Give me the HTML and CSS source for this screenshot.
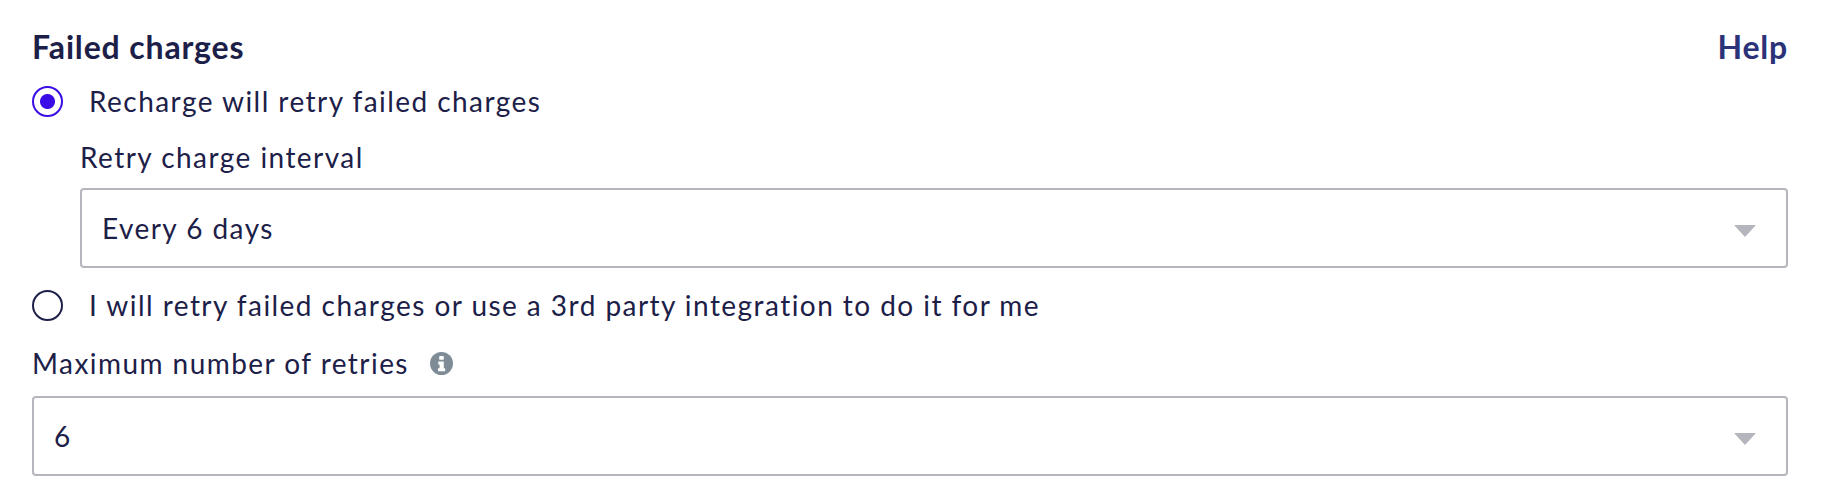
FILE: index.html
```html
<!DOCTYPE html>
<html lang="en">
<head>
<meta charset="utf-8">
<title>Failed charges</title>
<link rel="stylesheet" href="styles.css">
</head>
<body>
<section class="panel">
  <header class="panel-head">
    <h2 class="panel-title">Failed charges</h2>
    <a class="help" href="#">Help</a>
  </header>
  <label class="radio-row radio-row-first">
    <input class="radio" type="radio" name="retry" checked>
    <span>Recharge will retry failed charges</span>
  </label>
  <div class="nested">
    <div class="field-label field-label-nested">Retry charge interval</div>
    <div class="select">
      <span>Every 6 days</span>
      <svg class="caret" viewBox="0 0 22 12" width="22" height="12"><path d="M0 0H22L11 12Z"/></svg>
    </div>
  </div>
  <label class="radio-row radio-row-second">
    <input class="radio" type="radio" name="retry">
    <span>I will retry failed charges or use a 3rd party integration to do it for me</span>
  </label>
  <div class="field-label field-label-max">
    <span>Maximum number of retries</span>
    <svg class="info" viewBox="0 0 24 24" width="23" height="23">
      <circle cx="12" cy="12" r="12" fill="#7f8c97"/>
      <rect x="9.6" y="4.2" width="4.8" height="4" rx="1" fill="#fff"/>
      <path d="M8.6 10h5.8v7h1.4v3.2H8.4V17h1.6v-3.9H8.6z" fill="#fff"/>
    </svg>
  </div>
  <div class="select">
    <span>6</span>
    <svg class="caret" viewBox="0 0 22 12" width="22" height="12"><path d="M0 0H22L11 12Z"/></svg>
  </div>
</section>
</body>
</html>
```
FILE: styles.css
```css
* { box-sizing: border-box; }
html, body { margin: 0; background: #fff; }
body {
  height: 500px;
  overflow: hidden;
  font-family: "Lato", "Liberation Sans", sans-serif;
  font-size: 28px;
  letter-spacing: 1.45px;
  color: #1c2048;
}
.panel { padding: 29px 40px 0 32px; }
.panel-head {
  display: flex;
  justify-content: space-between;
  align-items: center;
  height: 36px;
}
.panel-title { margin: 0; font-size: 32px; font-weight: 700; letter-spacing: 0.85px; line-height: 36px; }
.help { font-size: 32px; font-weight: 700; letter-spacing: 0.8px; color: #2b3278; text-decoration: none; line-height: 36px; }
.radio-row { display: flex; align-items: center; gap: 26px; height: 32px; }
.radio-row-first { margin-top: 20px; }
.radio-row-second { margin-top: 21px; }
.radio {
  appearance: none;
  flex: none;
  width: 31px;
  height: 31px;
  margin: 0;
  border: 2px solid #1c2048;
  border-radius: 50%;
  background: #fff;
}
.radio:checked {
  border-color: #3a0ce6;
  background: radial-gradient(circle, #3a0ce6 0 7px, #fff 8px);
}
.nested { margin-left: 48px; }
.field-label { line-height: 32px; height: 32px; }
.field-label-nested { margin-top: 24px; margin-bottom: 15px; }
.field-label-max { display: flex; align-items: center; gap: 21px; margin-top: 26px; margin-bottom: 17px; }
.select {
  position: relative;
  display: flex;
  align-items: center;
  height: 80px;
  padding-left: 20px;
  border: 2px solid #b5b5bd;
  border-radius: 4px;
  background: #fff;
}
.caret { position: absolute; right: 30px; top: 35px; fill: #b5b5bd; }
.info { flex: none; }
```
